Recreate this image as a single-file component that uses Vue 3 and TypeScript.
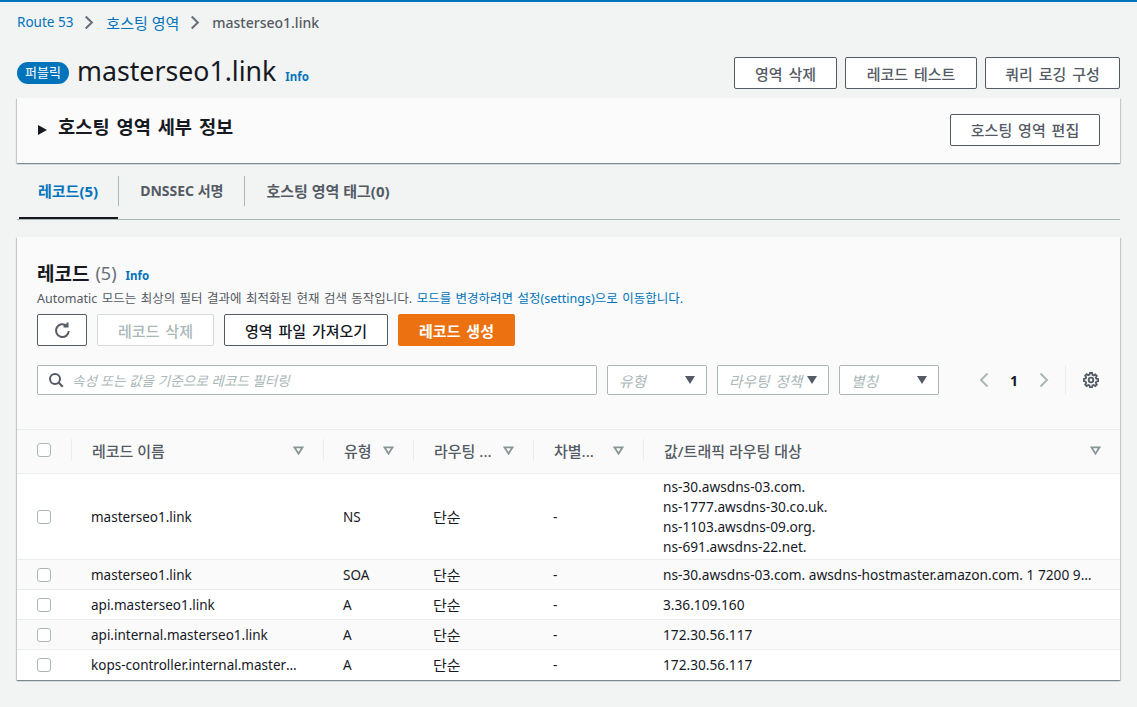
<script setup lang="ts">
interface DnsRecord {
  name: string
  type: string
  values: string[]
}

const headerCols = [
  { label: '레코드 이름' },
  { label: '유형' },
  { label: '라우팅 ...' },
  { label: '차별...' },
  { label: '값/트래픽 라우팅 대상' },
]

const records: DnsRecord[] = [
  {
    name: 'masterseo1.link',
    type: 'NS',
    values: ['ns-30.awsdns-03.com.', 'ns-1777.awsdns-30.co.uk.', 'ns-1103.awsdns-09.org.', 'ns-691.awsdns-22.net.'],
  },
  { name: 'masterseo1.link', type: 'SOA', values: ['ns-30.awsdns-03.com. awsdns-hostmaster.amazon.com. 1 7200 900 1209600 86400'] },
  { name: 'api.masterseo1.link', type: 'A', values: ['3.36.109.160'] },
  { name: 'api.internal.masterseo1.link', type: 'A', values: ['172.30.56.117'] },
  { name: 'kops-controller.internal.masterseo1.link', type: 'A', values: ['172.30.56.117'] },
]
</script>

<template>
  <div class="page">
    <nav class="crumbs">
      <a class="crumb-root">Route 53</a>
      <svg class="crumb-sep" viewBox="0 0 10 16"><path d="M1.500 1.500 8 8l-6.500 6.500" /></svg>
      <a class="ko">호스팅 영역</a>
      <svg class="crumb-sep" viewBox="0 0 10 16"><path d="M1.500 1.500 8 8l-6.500 6.500" /></svg>
      <span class="crumb-last">masterseo1.link</span>
    </nav>

    <header class="head">
      <span class="badge">퍼블릭</span>
      <h1>masterseo1.link</h1>
      <a class="info">Info</a>
      <div class="head-actions">
        <button class="btn w-del">영역 삭제</button>
        <button class="btn w-test">레코드 테스트</button>
        <button class="btn w-log">쿼리 로깅 구성</button>
      </div>
    </header>

    <section class="details">
      <span class="caret"></span>
      <h2>호스팅 영역 세부 정보</h2>
      <button class="btn w-edit">호스팅 영역 편집</button>
    </section>

    <div class="tabs">
      <div class="tab active">레코드(5)</div>
      <div class="tab latin">DNSSEC 서명</div>
      <div class="tab">호스팅 영역 태그(0)</div>
    </div>

    <section class="card">
      <div class="card-top">
        <div class="title-row">
          <h2>레코드</h2>
          <span class="count">(5)</span>
          <a class="info">Info</a>
        </div>
        <p class="note">Automatic 모드는 최상의 필터 결과에 최적화된 현재 검색 동작입니다. <a>모드를 변경하려면 설정(settings)으로 이동합니다.</a></p>
        <div class="actions">
          <button class="btn w-refresh" aria-label="새로 고침">
            <svg viewBox="0 0 17 17" class="icon refresh"><path d="M14.800 9A6.400 6.400 0 1 1 12.600 3.800M13.500 0.600v4H9.500" /></svg>
          </button>
          <button class="btn w-rmv" disabled>레코드 삭제</button>
          <button class="btn dark w-imp">영역 파일 가져오기</button>
          <button class="btn primary w-new">레코드 생성</button>
        </div>
        <div class="filters">
          <div class="search">
            <svg viewBox="0 0 16 16" class="icon search-icon"><circle cx="7" cy="7" r="5" /><path d="m10.800 10.800 4 4" /></svg>
            <span>속성 또는 값을 기준으로 레코드 필터링</span>
          </div>
          <div class="select w-type"><span>유형</span><i></i></div>
          <div class="select w-route"><span>라우팅 정책</span><i></i></div>
          <div class="select w-alias"><span>별칭</span><i></i></div>
          <div class="pager">
            <svg viewBox="0 0 10 16" class="page-arrow"><path d="M8.500 1.500 2 8l6.500 6.500" /></svg>
            <b>1</b>
            <svg viewBox="0 0 10 16" class="page-arrow"><path d="M1.500 1.500 8 8l-6.500 6.500" /></svg>
          </div>
          <div class="prefs">
            <svg viewBox="0 0 16 16" class="gear">
              <circle cx="8" cy="8" r="2.300" />
              <path d="M6.900 1h2.200l.4 1.900 1.200.5 1.600-1 1.500 1.500-1 1.600.5 1.200 1.900.4v2.200l-1.900.4-.5 1.200 1 1.600-1.500 1.500-1.600-1-1.200.5-.4 1.900H6.900l-.4-1.900-1.200-.5-1.600 1-1.500-1.500 1-1.600-.5-1.200L.8 9.100V6.900l1.900-.4.5-1.200-1-1.600 1.500-1.500 1.600 1 1.200-.5z" />
            </svg>
          </div>
        </div>
      </div>

      <table>
        <colgroup>
          <col class="c-check" /><col class="c-name" /><col class="c-type" /><col class="c-route" /><col class="c-diff" /><col />
        </colgroup>
        <thead>
          <tr>
            <th><span class="check"></span></th>
            <th v-for="col in headerCols" :key="col.label">
              <div class="th-in">
                <span>{{ col.label }}</span>
                <svg viewBox="0 0 12 10" class="sort"><path d="M1.500 1.500h9L6 8.500z" /></svg>
              </div>
            </th>
          </tr>
        </thead>
        <tbody>
          <tr v-for="(rec, i) in records" :key="i">
            <td><span class="check"></span></td>
            <td><div class="clip">{{ rec.name }}</div></td>
            <td>{{ rec.type }}</td>
            <td class="ko-cell">단순</td>
            <td>-</td>
            <td><div v-for="val in rec.values" :key="val" class="clip value">{{ val }}</div></td>
          </tr>
        </tbody>
      </table>
    </section>
  </div>
</template>

<style>
html, body {
  margin: 0;
  background: #f2f3f3;
}
</style>

<style scoped>
.page {
  box-sizing: border-box;
  height: 707px;
  padding: 0 17px;
  overflow: hidden;
  border-top: 2px solid #0073bb;
  background: #f2f3f3;
  color: #16191f;
  font-family: "Noto Sans", "Noto Sans CJK KR", sans-serif;
  font-size: 14px;
}
a {
  color: #0073bb;
}
.crumbs {
  display: flex;
  align-items: center;
  height: 20px;
  margin-top: 10px;
  font-size: 14px;
  color: #545b64;
}
.crumb-root {
  font-size: 13.500px;
}
.crumb-last {
  font-weight: 500;
}
.ko {
  font-size: 15px;
}
.crumb-sep {
  width: 10px;
  height: 15px;
  margin: 0 12px 0 11px;
  fill: none;
  stroke: #687078;
  stroke-width: 2.200;
}
.head {
  display: flex;
  align-items: center;
  height: 32px;
  margin-top: 25px;
}
.badge {
  display: block;
  width: 52px;
  height: 22px;
  border-radius: 11px;
  background: #0073bb;
  color: #fff;
  font-size: 13px;
  line-height: 21px;
  text-align: center;
}
h1 {
  margin: -4px 9px 0 8px;
  font-size: 26.700px;
  font-weight: 400;
  line-height: 32px;
}
.info {
  margin-top: 7px;
  font-size: 11.500px;
  font-weight: 700;
}
.head-actions {
  display: flex;
  gap: 8px;
  margin-left: auto;
}
.btn {
  box-sizing: border-box;
  height: 32px;
  padding: 0;
  border: 1px solid #545b64;
  border-radius: 2px;
  background: #fff;
  color: #545b64;
  font-family: inherit;
  font-size: 15px;
  font-weight: 500;
  word-spacing: 2px;
}
.w-del { width: 103px; }
.w-test { width: 132px; }
.w-log { width: 135px; }
.w-edit { width: 150px; }
.w-refresh { width: 50px; display: flex; align-items: center; justify-content: center; }
.w-rmv { width: 117px; }
.w-imp { width: 164px; }
.w-new { width: 117px; }
.btn.dark {
  color: #16191f;
}
.btn.primary {
  border-color: #ec7211;
  background: #ec7211;
  color: #fff;
  font-weight: 700;
}
.btn:disabled {
  border-color: #d5dbdb;
  color: #aab7b8;
}
.details {
  display: flex;
  align-items: center;
  box-sizing: border-box;
  width: 1103px;
  height: 65px;
  margin-top: 9px;
  padding: 0 20px 0 21px;
  background: #fbfbfb;
  box-shadow: 0 1px 1px 0 rgba(0, 28, 36, 0.3), 1px 1px 1px 0 rgba(0, 28, 36, 0.15), -1px 1px 1px 0 rgba(0, 28, 36, 0.15);
}
.caret {
  width: 0;
  height: 0;
  margin-right: 11px;
  margin-top: -2px;
  border-left: 9px solid #16191f;
  border-top: 5px solid transparent;
  border-bottom: 5px solid transparent;
}
.details h2 {
  margin: -10px 0 0;
  font-size: 18.700px;
  font-weight: 700;
  word-spacing: 2px;
}
.details .btn {
  margin-left: auto;
  margin-top: -2px;
}
.tabs {
  display: flex;
  width: 1103px;
  height: 57px;
  box-sizing: border-box;
  border-bottom: 1px solid #aab7b8;
}
.tab {
  position: relative;
  display: flex;
  align-items: center;
  box-sizing: border-box;
  height: 30px;
  margin-top: 13px;
  padding: 0 21px 2px;
  border-left: 1px solid #aab7b8;
  color: #545b64;
  font-size: 15px;
  font-weight: 700;
}
.tab.latin {
  font-size: 14px;
}
.tab:first-child {
  margin-left: 2px;
  padding: 0 20px 2px 19px;
  border-left: 0;
}
.tab.active {
  color: #0073bb;
}
.tab.active::after {
  content: "";
  position: absolute;
  left: 0;
  right: 0;
  top: 41px;
  height: 2px;
  background: #16191f;
}
.card {
  width: 1103px;
  margin-top: 17px;
  background: #fafafa;
  box-shadow: 0 1px 1px 0 rgba(0, 28, 36, 0.3), 1px 1px 1px 0 rgba(0, 28, 36, 0.15), -1px 1px 1px 0 rgba(0, 28, 36, 0.15);
}
.card-top {
  box-sizing: border-box;
  height: 193px;
  padding: 23px 20px 0;
  border-bottom: 1px solid #eaeded;
}
.title-row {
  display: flex;
  align-items: center;
  height: 26px;
}
.title-row h2 {
  margin: 0;
  font-size: 19px;
  font-weight: 700;
}
.count {
  margin-left: 6px;
  color: #687078;
  font-size: 18px;
}
.title-row .info {
  margin-left: 9px;
  margin-top: 5px;
}
.note {
  margin: 4px 0 0;
  height: 18px;
  color: #545b64;
  font-size: 12.500px;
  line-height: 18px;
  word-spacing: 1.200px;
}
.actions {
  display: flex;
  gap: 10px;
  margin-top: 6px;
}
.icon {
  width: 16px;
  height: 16px;
  fill: none;
  stroke: #545b64;
  stroke-width: 2;
}
.icon.refresh {
  width: 17px;
  height: 17px;
}
.filters {
  display: flex;
  align-items: center;
  margin-top: 19px;
  height: 30px;
}
.search {
  display: flex;
  flex: none;
  align-items: center;
  box-sizing: border-box;
  width: 560px;
  height: 30px;
  padding-left: 10px;
  border: 1px solid #aab7b8;
  border-radius: 2px;
  background: #fff;
  color: #aab7b8;
  font-size: 13.600px;
  font-style: italic;
}
.search-icon {
  margin-right: 8px;
}
.select {
  display: flex;
  flex: none;
  align-items: center;
  justify-content: space-between;
  box-sizing: border-box;
  height: 30px;
  margin-left: 10px;
  padding: 0 11px;
  border: 1px solid #aab7b8;
  border-radius: 2px;
  background: #fff;
  color: #aab7b8;
  font-size: 14.700px;
  font-style: italic;
  word-spacing: 2px;
  white-space: nowrap;
}
.select i {
  flex: none;
  width: 0;
  height: 0;
  border-top: 8px solid #545b64;
  border-left: 5px solid transparent;
  border-right: 5px solid transparent;
}
.w-type { width: 100px; }
.w-route { width: 112px; }
.w-alias { width: 100px; }
.pager {
  display: flex;
  flex: none;
  align-items: center;
  margin-left: 40px;
  font-size: 14px;
}
.pager b {
  width: 50px;
  text-align: center;
}
.page-arrow {
  width: 10px;
  height: 16px;
  fill: none;
  stroke: #aab7b8;
  stroke-width: 2;
}
.prefs {
  display: flex;
  flex: none;
  align-items: center;
  justify-content: center;
  width: 49px;
  height: 30px;
  margin-left: 16px;
  border-left: 1px solid #eaeded;
}
.gear {
  width: 16px;
  height: 16px;
  fill: none;
  stroke: #545b64;
  stroke-width: 1.800;
}
table {
  width: 100%;
  border-collapse: collapse;
  table-layout: fixed;
}
.c-check { width: 54px; }
.c-name { width: 252px; }
.c-type { width: 90px; }
.c-route { width: 120px; }
.c-diff { width: 110px; }
th {
  height: 43px;
  padding: 0 0 2px;
  box-sizing: border-box;
  border-bottom: 1px solid #eaeded;
  background: #fafafa;
  color: #545b64;
  font-size: 15px;
  font-weight: 500;
  text-align: left;
  white-space: nowrap;
}
th:first-child {
  padding-left: 20px;
}
td:first-child {
  padding-left: 20px;
}
.th-in {
  display: flex;
  align-items: center;
  justify-content: space-between;
  box-sizing: border-box;
  height: 22px;
  padding: 0 19px 0 20px;
  border-left: 1px solid #eaeded;
}
.sort {
  flex: none;
  width: 11px;
  height: 9px;
  fill: none;
  stroke: #879596;
  stroke-width: 2;
}
.check {
  display: block;
  box-sizing: border-box;
  width: 14px;
  height: 14px;
  border: 1px solid #aab7b8;
  border-radius: 3px;
  background: #fff;
}
td {
  height: 30px;
  padding: 3px 0 2px 20px;
  box-sizing: border-box;
  border-bottom: 1px solid #eaeded;
  background: #fff;
  color: #16191f;
  font-size: 13.500px;
  line-height: 20px;
}
td.ko-cell {
  font-size: 15px;
}
tbody tr:nth-child(even) td {
  background: #fafafa;
}
tbody tr:last-child td {
  height: 31px;
  border-bottom: 0;
}
.clip {
  overflow: hidden;
  padding-right: 21px;
  text-overflow: ellipsis;
  white-space: nowrap;
}
.value {
  font-size: 13.700px;
  padding-right: 25px;
}
</style>
